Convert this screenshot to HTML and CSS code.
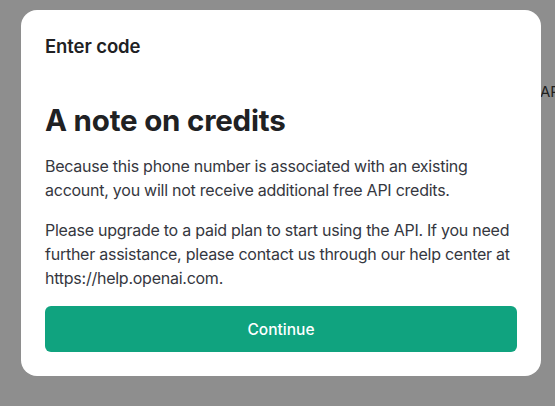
FILE: index.html
```html
<!DOCTYPE html>
<html lang="en">
<head>
<meta charset="utf-8">
<title>A note on credits</title>
<link rel="stylesheet" href="styles.css">
</head>
<body>
<div class="page-behind"><span class="behind-text">API</span></div>
<div class="modal" role="dialog" aria-labelledby="note-title">
  <div class="modal-header">Enter code</div>
  <h1 id="note-title" class="modal-title">A note on credits</h1>
  <p class="modal-text">Because this phone number is associated with an existing account, you will not receive additional free API credits.</p>
  <p class="modal-text">Please upgrade to a paid plan to start using the API. If you need further assistance, please contact us through our help center at https://help.openai.com.</p>
  <button class="btn-primary" type="button">Continue</button>
</div>
</body>
</html>
```
FILE: styles.css
```css
html, body {
  margin: 0;
  padding: 0;
}
body {
  background: #8e8e8e;
  font-family: Inter, "Noto Sans", "Liberation Sans", sans-serif;
  width: 555px;
  height: 406px;
  overflow: hidden;
  position: relative;
}
.page-behind {
  position: absolute;
  left: 540px;
  top: 81px;
}
.behind-text {
  font-size: 15px;
  color: #1e1e1e;
  line-height: 18px;
}
.modal {
  position: relative;
  margin: 10px 0 0 21px;
  width: 520px;
  box-sizing: border-box;
  padding: 24px;
  background: #ffffff;
  border-radius: 16px;
}
.modal-header {
  font-size: 18.5px;
  line-height: 24px;
  font-weight: 600;
  color: #202123;
  letter-spacing: -0.1px;
}
.modal-title {
  margin: 44px 0 16px;
  font-size: 29.5px;
  line-height: 36px;
  font-weight: 700;
  color: #202123;
  letter-spacing: -0.2px;
}
.modal-text {
  margin: 0 0 16px;
  font-size: 16px;
  line-height: 24px;
  color: #353740;
  letter-spacing: -0.25px;
}
.btn-primary {
  display: block;
  width: 100%;
  height: 46px;
  margin-top: 16px;
  border: none;
  border-radius: 6px;
  background: #10a37f;
  color: #ffffff;
  font-family: inherit;
  font-size: 15.5px;
  font-weight: 500;
}
```
